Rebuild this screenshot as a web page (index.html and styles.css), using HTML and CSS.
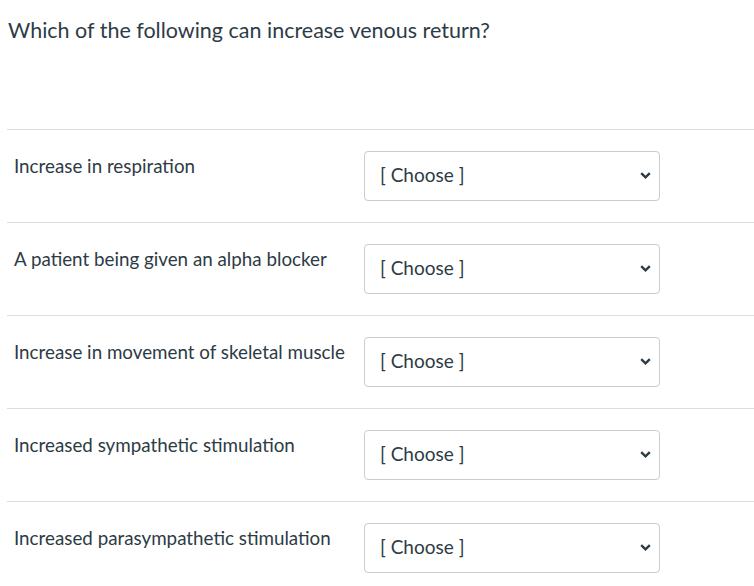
FILE: index.html
```html
<!DOCTYPE html>
<html lang="en">
<head>
<meta charset="utf-8">
<title>Venous return question</title>
<link rel="stylesheet" href="styles.css">
</head>
<body>
<div class="question">
  <p class="prompt">Which of the following can increase venous return?</p>
  <div class="answers">
    <div class="row">
      <div class="label">Increase in respiration</div>
      <div class="select"><span class="choose">[ Choose ]</span><svg class="chev" width="11" height="7" viewBox="0 0 11 7"><path d="M1.2 1.2 L5.5 5.3 L9.8 1.2" fill="none" stroke="#2d3b45" stroke-width="2.4"/></svg></div>
    </div>
    <div class="row">
      <div class="label">A patient being given an alpha blocker</div>
      <div class="select"><span class="choose">[ Choose ]</span><svg class="chev" width="11" height="7" viewBox="0 0 11 7"><path d="M1.2 1.2 L5.5 5.3 L9.8 1.2" fill="none" stroke="#2d3b45" stroke-width="2.4"/></svg></div>
    </div>
    <div class="row">
      <div class="label">Increase in movement of skeletal muscle</div>
      <div class="select"><span class="choose">[ Choose ]</span><svg class="chev" width="11" height="7" viewBox="0 0 11 7"><path d="M1.2 1.2 L5.5 5.3 L9.8 1.2" fill="none" stroke="#2d3b45" stroke-width="2.4"/></svg></div>
    </div>
    <div class="row">
      <div class="label">Increased sympathetic stimulation</div>
      <div class="select"><span class="choose">[ Choose ]</span><svg class="chev" width="11" height="7" viewBox="0 0 11 7"><path d="M1.2 1.2 L5.5 5.3 L9.8 1.2" fill="none" stroke="#2d3b45" stroke-width="2.4"/></svg></div>
    </div>
    <div class="row">
      <div class="label">Increased parasympathetic stimulation</div>
      <div class="select"><span class="choose">[ Choose ]</span><svg class="chev" width="11" height="7" viewBox="0 0 11 7"><path d="M1.2 1.2 L5.5 5.3 L9.8 1.2" fill="none" stroke="#2d3b45" stroke-width="2.4"/></svg></div>
    </div>
  </div>
</div>
</body>
</html>
```
FILE: styles.css
```css
html, body {
  margin: 0;
  padding: 0;
  background: #ffffff;
}
body {
  font-family: Lato, "Open Sans", sans-serif;
  color: #2d3b45;
  overflow: hidden;
}
.prompt {
  margin: 0;
  padding: 17px 0 0 8px;
  font-size: 21.5px;
  line-height: 26px;
  height: 112px;
}
.answers {
  margin-left: 7px;
}
.row {
  display: grid;
  grid-template-columns: 350px 296px;
  align-items: start;
  border-top: 1px solid #dcdfe1;
  padding: 21px 0 21px 7px;
}
.row:last-child {
  padding-bottom: 20px;
}
.label {
  font-size: 18.8px;
  line-height: 22px;
  margin-top: 4px;
}
.select {
  box-sizing: border-box;
  height: 50px;
  border: 1px solid #c7cdd1;
  border-radius: 4px;
  display: flex;
  align-items: center;
  justify-content: space-between;
  padding: 0 8px 1px 15px;
  font-size: 19px;
}
.choose {
  margin-bottom: 2px;
}
.chev {
  display: block;
}
```
